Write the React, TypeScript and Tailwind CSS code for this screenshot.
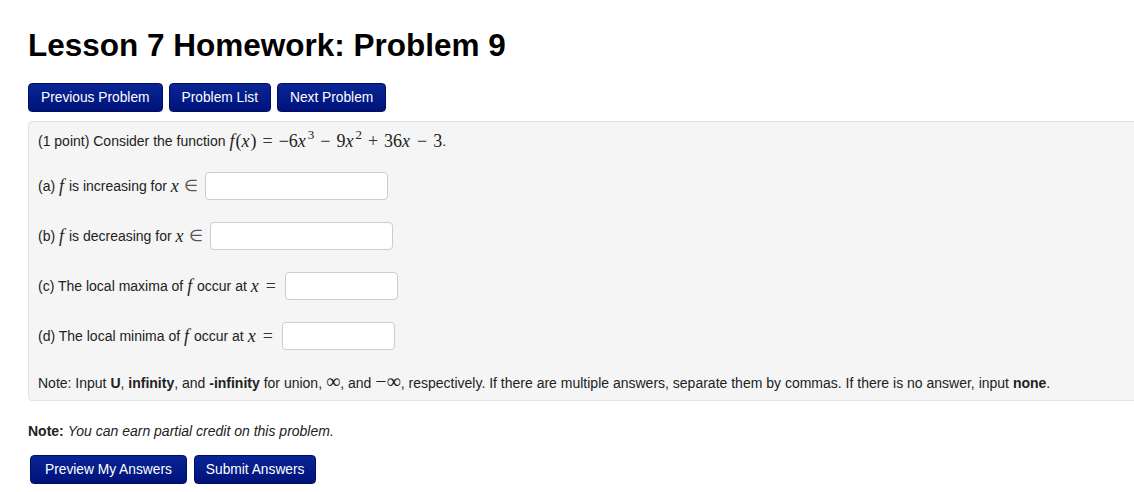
import React from "react";

const btn =
  "h-[29px] rounded-[4px] border border-[#00105e] bg-gradient-to-b from-[#0a2596] to-[#00127a] text-[13.75px] leading-none text-white";

const math = "font-['Liberation_Serif',serif] text-[18px] leading-none";

function V({ children }: { children: React.ReactNode }) {
  return <i className={`${math} mr-[1px]`}>{children}</i>;
}

function Op({ children }: { children: React.ReactNode }) {
  return <span className={`${math} mx-[6px] text-[#333]`}>{children}</span>;
}

function Rel({ children }: { children: React.ReactNode }) {
  return <span className="mx-[4px] font-['Liberation_Serif',serif] text-[16px] leading-none text-[#555]">{children}</span>;
}

function N({ children }: { children: React.ReactNode }) {
  return <span className={math}>{children}</span>;
}

function Sup({ children }: { children: React.ReactNode }) {
  return <sup className="ml-[1px] font-['Liberation_Serif',serif] text-[13px] leading-none">{children}</sup>;
}

function Field({ w }: { w: string }) {
  return <span className={`ml-[3px] inline-block h-[28px] rounded-[4px] border border-[#cccccc] bg-white align-middle ${w}`} />;
}

export default function App() {
  return (
    <div className="w-full overflow-hidden bg-white font-['Liberation_Sans',Arial,sans-serif] text-[#222]">
      <div className="pl-[28px] pt-[27px]">
        <h1 className="text-[31.5px] font-bold leading-[36px] text-black">Lesson 7 Homework: Problem 9</h1>

        <div className="mt-[20px] flex gap-[6px]">
          <button className={`${btn} px-[12px]`}>Previous Problem</button>
          <button className={`${btn} px-[12px]`}>Problem List</button>
          <button className={`${btn} px-[12px]`}>Next Problem</button>
        </div>

        <div className="mt-[9px] w-[1120px] rounded-[4px] border border-[#e3e3e3] bg-[#f5f5f5] pl-[9px] pt-[9px] pb-[9px] text-[14px]">
          <p className="flex h-[20px] items-center">
            <span>(1 point) Consider the function&nbsp;</span>
            <V>f</V>
            <N>(</N>
            <V>x</V>
            <N>)</N>
            <Op>=</Op>
            <N>−6</N>
            <V>x</V>
            <Sup>3</Sup>
            <Op>−</Op>
            <N>9</N>
            <V>x</V>
            <Sup>2</Sup>
            <Op>+</Op>
            <N>36</N>
            <V>x</V>
            <Op>−</Op>
            <N>3</N>
            <span>.</span>
          </p>

          <p className="mt-[21px] flex h-[28px] items-center">
            <span>(a)&nbsp;</span>
            <V>f</V>
            <span>&nbsp;is increasing for&nbsp;</span>
            <V>x</V>
            <Rel>∈</Rel>
            <Field w="w-[183px]" />
          </p>

          <p className="mt-[22px] flex h-[28px] items-center">
            <span>(b)&nbsp;</span>
            <V>f</V>
            <span>&nbsp;is decreasing for&nbsp;</span>
            <V>x</V>
            <Rel>∈</Rel>
            <Field w="w-[183px]" />
          </p>

          <p className="mt-[22px] flex h-[28px] items-center">
            <span>(c) The local maxima of&nbsp;</span>
            <V>f</V>
            <span>&nbsp;occur at&nbsp;</span>
            <V>x</V>
            <Op>=</Op>
            <Field w="w-[113px]" />
          </p>

          <p className="mt-[22px] flex h-[28px] items-center">
            <span>(d) The local minima of&nbsp;</span>
            <V>f</V>
            <span>&nbsp;occur at&nbsp;</span>
            <V>x</V>
            <Op>=</Op>
            <Field w="w-[113px]" />
          </p>

          <p className="mt-[21px] h-[20px] leading-[20px]">
            Note: Input <b>U</b>, <b>infinity</b>, and <b>-infinity</b> for union,{" "}
            <span className="font-['Liberation_Serif',serif] text-[20px] leading-none">∞</span>, and{" "}
            <span className="font-['Liberation_Serif',serif] text-[20px] leading-none">−∞</span>, respectively. If there are
            multiple answers, separate them by commas. If there is no answer, input <b>none</b>.
          </p>
        </div>

        <p className="mt-[20px] text-[14px] leading-[20px] text-[#222]">
          <b>Note:</b> <i>You can earn partial credit on this problem.</i>
        </p>

        <div className="mt-[14px] flex gap-[7px] pl-[2px]">
          <button className={`${btn} px-[14px]`}>Preview My Answers</button>
          <button className={`${btn} px-[11px]`}>Submit Answers</button>
        </div>
        <div className="h-[8px]" />
      </div>
    </div>
  );
}
